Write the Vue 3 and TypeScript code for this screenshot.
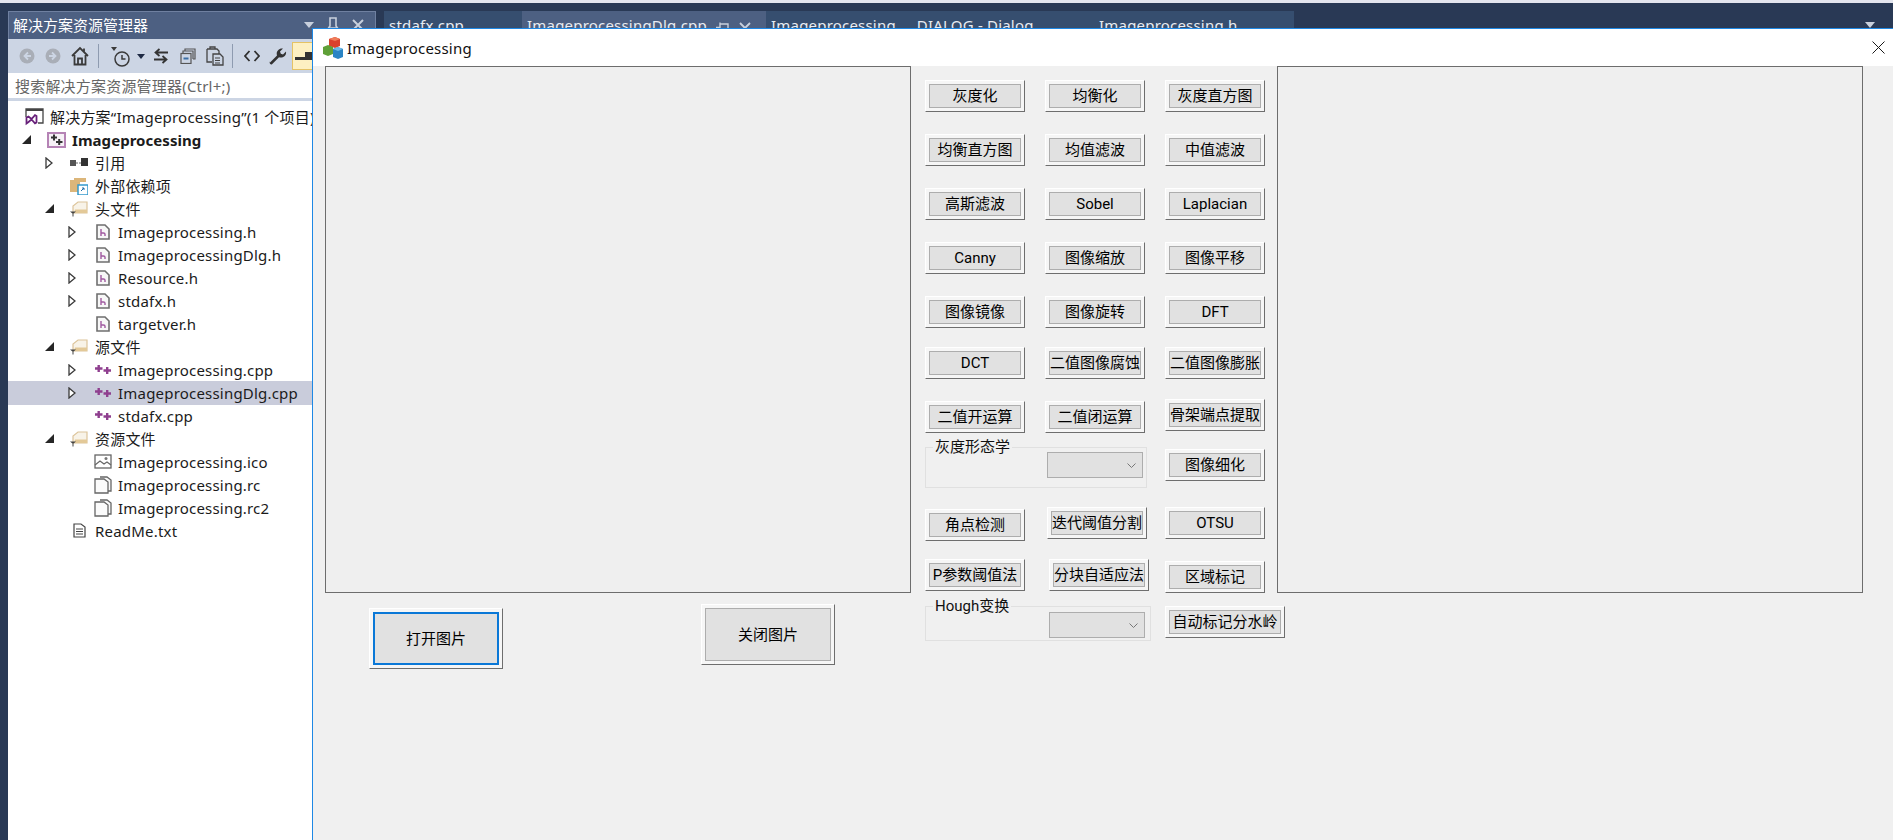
<script setup lang="ts">
interface TreeRow {
  label: string
  level: number
  arrow?: 'open' | 'closed'
  icon: string
  bold?: boolean
  selected?: boolean
}

const treeRows: TreeRow[] = [
  { label: '解决方案“Imageprocessing”(1 个项目)', level: 0, icon: 'solution' },
  { label: 'Imageprocessing', level: 1, arrow: 'open', icon: 'project', bold: true },
  { label: '引用', level: 2, arrow: 'closed', icon: 'refs' },
  { label: '外部依赖项', level: 2, icon: 'ext' },
  { label: '头文件', level: 2, arrow: 'open', icon: 'filter' },
  { label: 'Imageprocessing.h', level: 3, arrow: 'closed', icon: 'h' },
  { label: 'ImageprocessingDlg.h', level: 3, arrow: 'closed', icon: 'h' },
  { label: 'Resource.h', level: 3, arrow: 'closed', icon: 'h' },
  { label: 'stdafx.h', level: 3, arrow: 'closed', icon: 'h' },
  { label: 'targetver.h', level: 3, icon: 'h' },
  { label: '源文件', level: 2, arrow: 'open', icon: 'filter' },
  { label: 'Imageprocessing.cpp', level: 3, arrow: 'closed', icon: 'cpp' },
  { label: 'ImageprocessingDlg.cpp', level: 3, arrow: 'closed', icon: 'cpp', selected: true },
  { label: 'stdafx.cpp', level: 3, icon: 'cpp' },
  { label: '资源文件', level: 2, arrow: 'open', icon: 'filter' },
  { label: 'Imageprocessing.ico', level: 3, icon: 'ico' },
  { label: 'Imageprocessing.rc', level: 3, icon: 'rc' },
  { label: 'Imageprocessing.rc2', level: 3, icon: 'rc' },
  { label: 'ReadMe.txt', level: 2, icon: 'txt' },
]

const gridRows: string[][] = [
  ['灰度化', '均衡化', '灰度直方图'],
  ['均衡直方图', '均值滤波', '中值滤波'],
  ['高斯滤波', 'Sobel', 'Laplacian'],
  ['Canny', '图像缩放', '图像平移'],
  ['图像镜像', '图像旋转', 'DFT'],
]
</script>

<template>
  <div class="desktop">
    <div class="top-strip"></div>
    <div class="ide">
      <section class="explorer">
        <header class="explorer-title">
          <span class="title-text">解决方案资源管理器</span>
          <span class="title-tools">
            <svg width="12" height="8" viewBox="0 0 12 8"><path d="M1 1h10L6 7z" fill="#c8d0dd" /></svg>
            <svg width="12" height="16" viewBox="0 0 12 16"><path d="M3 1h6v8l1.500 2h-9L3 9zM6 11v4" fill="none" stroke="#c8d0dd" stroke-width="1.600" /></svg>
            <svg width="14" height="14" viewBox="0 0 14 14"><path d="M2 2l10 10M12 2L2 12" stroke="#c8d0dd" stroke-width="2" /></svg>
          </span>
        </header>
        <div class="toolbar">
          <svg class="tb-a" width="16" height="16" viewBox="0 0 16 16"><circle cx="8" cy="8" r="7.500" fill="#a9aeb7" /><path d="M9 4.500L5.500 8 9 11.500M6 8h6" fill="none" stroke="#ccd5e4" stroke-width="1.800" /></svg>
          <svg class="tb-b" width="16" height="16" viewBox="0 0 16 16"><circle cx="8" cy="8" r="7.500" fill="#a9aeb7" /><path d="M7 4.500L10.500 8 7 11.500M10 8H4" fill="none" stroke="#ccd5e4" stroke-width="1.800" /></svg>
          <svg class="tb-c" width="18" height="20" viewBox="0 0 18 20"><path d="M1 10l8-8 8 8M3.500 9v9.500h11V9M7 18.500v-6h4v6M13 2.500v4" fill="none" stroke="#3a3a3a" stroke-width="1.800" /></svg>
          <i class="tb-sep sep-a"></i>
          <svg class="tb-d" width="22" height="22" viewBox="0 0 22 22"><path d="M1 1h6L4 5z" fill="#3a3a3a" /><circle cx="12" cy="13" r="7" fill="none" stroke="#3a3a3a" stroke-width="1.500" /><path d="M12 9v4h3.500" fill="none" stroke="#3a3a3a" stroke-width="1.500" /></svg>
          <svg class="tb-e" width="8" height="5" viewBox="0 0 8 5"><path d="M0 0h8L4 5z" fill="#1e2a44" /></svg>
          <svg class="tb-f" width="16" height="16" viewBox="0 0 16 16"><path d="M15 4.500H3M6.500 1L2.500 4.500 6.500 8M1 11.500h12M9.500 8l4 3.500-4 3.500" fill="none" stroke="#333" stroke-width="1.800" /></svg>
          <svg class="tb-g" width="16" height="16" viewBox="0 0 16 16"><path d="M5 3V1h10v10h-2M3 5V3h10v8" fill="none" stroke="#555" stroke-width="1.200" /><rect x="1" y="5.500" width="10" height="10" fill="#ccd5e4" stroke="#555" stroke-width="1.200" /><path d="M3.500 10.500h5" stroke="#3b6ea5" stroke-width="2" /></svg>
          <svg class="tb-h" width="18" height="20" viewBox="0 0 18 20"><path d="M1 3h10l2 2v4M1 3v13h5" fill="none" stroke="#444" stroke-width="1.300" /><path d="M4 3V1h5v2" fill="none" stroke="#444" stroke-width="1.300" /><path d="M7 8h7l3 3v8H7z" fill="#ccd5e4" stroke="#444" stroke-width="1.300" /><path d="M9 12h5M9 14.500h5M9 17h5" stroke="#444" /></svg>
          <i class="tb-sep sep-b"></i>
          <svg class="tb-i" width="16" height="12" viewBox="0 0 16 12"><path d="M5.500 1L1 6l4.500 5M10.500 1L15 6l-4.500 5" fill="none" stroke="#2f2f2f" stroke-width="1.800" /></svg>
          <svg class="tb-j" width="18" height="18" viewBox="0 0 18 18"><path d="M1 15.500L8 8.500C6.800 5 9.500 .8 14 1.500L11 4.500l.8 2.200 2.200.8 3-3c.7 4.500-3.500 7-7 5.800l-7 7c-1 1-3.200-1-2-2.800z" fill="#333" /></svg>
          <span class="tb-pin"><svg width="26" height="10" viewBox="0 0 26 10"><path d="M0 9h26v-3h-6V1H10v5H0z" fill="#333" /></svg></span>
        </div>
        <div class="search">搜索解决方案资源管理器(Ctrl+;)</div>
        <ul class="tree">
          <li v-for="row in treeRows" :key="row.label" class="tree-row" :class="[`lv${row.level}`, { selected: row.selected, bold: row.bold }]">
            <span class="arrow-slot">
              <svg v-if="row.arrow === 'open'" width="9" height="9" viewBox="0 0 9 9"><path d="M9 0v9H0z" fill="#262626" /></svg>
              <svg v-else-if="row.arrow === 'closed'" class="closed-arrow" width="8" height="12" viewBox="0 0 8 12"><path d="M1 1l6 5-6 5z" fill="#fff" stroke="#3a3a3a" stroke-width="1.300" /></svg>
            </span>
            <span class="icon-slot">
              <svg v-if="row.icon === 'solution'" width="19" height="18" viewBox="0 0 19 18"><path d="M1 9V1h17v14h-5" fill="none" stroke="#444" stroke-width="1.300" /><path d="M1 2h17" stroke="#444" stroke-width="2" /><path d="M1.500 9.500v6l2-1.500 3-2.500 3.500 3.800 1.500-.8V8l-1.500-.8-3.500 3.800-3-2.500z" fill="none" stroke="#68217a" stroke-width="1.800" /></svg>
              <svg v-else-if="row.icon === 'project'" width="19" height="16" viewBox="0 0 19 16"><rect x="1" y="1" width="17" height="14" fill="#f6f1f6" stroke="#b583b5" stroke-width="2" /><path d="M4 5.500h6M7 2.500v6M9 10h6.500M12.200 7v6" stroke="#333" stroke-width="2" /></svg>
              <svg v-else-if="row.icon === 'refs'" width="18" height="10" viewBox="0 0 18 10"><rect x="0" y="2" width="6" height="6" fill="#555" /><rect x="11" y="0" width="7" height="8" fill="#333" /><path d="M6 5h5" stroke="#666" stroke-dasharray="2 1" /></svg>
              <svg v-else-if="row.icon === 'ext'" width="18" height="18" viewBox="0 0 18 18"><path d="M0 3h4V1h12v4H0zM0 4h10v11H0z" fill="#dcb67a" /><rect x="8" y="8" width="10" height="10" fill="#fff" stroke="#3399cc" stroke-width="1.500" /><path d="M11 14l3-3M12 11h2v2" stroke="#1e6fa8" fill="none" /></svg>
              <svg v-else-if="row.icon === 'filter'" width="18" height="17" viewBox="0 0 18 17"><path d="M3 13V6l5-4h9v11z" fill="#f8f3e8" stroke="#dcc49a" stroke-width="1.200" /><path d="M5 9.500h12V13H4z" fill="#e3c998" /><path d="M0 11.500h6l-3 2.500z M2.500 14h1v2.500h-1z" fill="#444" /></svg>
              <svg v-else-if="row.icon === 'h'" width="14" height="16" viewBox="0 0 14 16"><path d="M1 1h8l4 4v10H1z" fill="#f7f7f7" stroke="#6f6f6f" stroke-width="1.600" /><path d="M5 5v7M5 9h2.500c1 0 1.500.5 1.500 1.200V12" fill="none" stroke="#a05aa0" stroke-width="1.400" /></svg>
              <svg v-else-if="row.icon === 'cpp'" width="16" height="10" viewBox="0 0 16 10"><path d="M0 3.500h7.500M3.700 0v7M8.500 5.500H16M12.200 2v7" stroke="#8f3f8f" stroke-width="2.400" /></svg>
              <svg v-else-if="row.icon === 'ico'" width="18" height="15" viewBox="0 0 18 15"><rect x="1" y="1" width="16" height="13" fill="#fff" stroke="#666" stroke-width="1.300" /><path d="M1 11l5-4 4 3 3-2 4 3" fill="none" stroke="#666" stroke-width="1.200" /><circle cx="12" cy="4.500" r="1.500" fill="#777" /></svg>
              <svg v-else-if="row.icon === 'rc'" width="18" height="18" viewBox="0 0 18 18"><path d="M6 1h7l4 3v11h-3" fill="#f8f8f8" stroke="#666" stroke-width="1.300" /><path d="M1 3h9l4 3v11H1z" fill="#fbfbfb" stroke="#666" stroke-width="1.300" /></svg>
              <svg v-else width="13" height="15" viewBox="0 0 13 15"><path d="M1 1h7l4 3v10H1z" fill="#fff" stroke="#444" stroke-width="1.200" /><path d="M3 6h7M3 8.500h7M3 11h7" stroke="#444" /></svg>
            </span>
            <span class="tree-label">{{ row.label }}</span>
          </li>
        </ul>
      </section>

      <nav class="tabs">
        <span class="tab tab-a">stdafx.cpp</span>
        <span class="tab tab-b">ImageprocessingDlg.cpp
          <svg width="14" height="12" viewBox="0 0 14 12"><path d="M4 2h8v7H4zM4 5.500H0M4 .500v10" fill="none" stroke="#c8d0dd" stroke-width="1.400" /></svg>
          <svg width="12" height="12" viewBox="0 0 12 12"><path d="M1 1l10 10M11 1L1 11" stroke="#c8d0dd" stroke-width="1.800" /></svg>
        </span>
        <span class="tab tab-c">Imageprocessing.... DIALOG - Dialog</span>
        <span class="tab tab-d">Imageprocessing.h</span>
      </nav>
      <svg class="tab-drop" width="12" height="7" viewBox="0 0 12 7"><path d="M1 0h10L6 6z" fill="#c8d0dd" /></svg>
    </div>

    <div class="dialog">
      <header class="dlg-title">
        <svg class="dlg-icon" width="22" height="22" viewBox="0 0 22 22">
          <path d="M7 2l6-2 5 2v7l-5 2-6-2z" fill="#d9412e" />
          <path d="M13 0l5 2-5 2-6-2z" fill="#ef7d5a" />
          <path d="M1 10l5-2 5 2v7l-5 2-5-2z" fill="#5fa038" />
          <path d="M11 12l5-2 5 2v8l-5 2-5-2z" fill="#2a84c4" />
          <path d="M11 12l5-2 5 2-5 2z" fill="#6cb8e6" />
        </svg>
        <span class="dlg-name">Imageprocessing</span>
        <svg class="dlg-close" width="13" height="13" viewBox="0 0 13 13"><path d="M.5.500l12 12M12.500.500l-12 12" stroke="#1a1a1a" stroke-width="1" /></svg>
      </header>

      <main class="dlg-body">
        <div class="left-col">
          <div class="picture"></div>
          <div class="pic-actions">
            <button class="win-btn big focused">打开图片</button>
            <button class="win-btn big close-btn">关闭图片</button>
          </div>
        </div>

        <div class="controls">
          <div v-for="row in gridRows" :key="row[0]" class="btn-row">
            <button v-for="b in row" :key="b" class="win-btn">{{ b }}</button>
          </div>

          <div class="btn-row row-dct">
            <button class="win-btn">DCT</button>
            <button class="win-btn">二值图像腐蚀</button>
            <button class="win-btn">二值图像膨胀</button>
          </div>
          <div class="btn-row row-open">
            <button class="win-btn">二值开运算</button>
            <button class="win-btn">二值闭运算</button>
            <button class="win-btn up2">骨架端点提取</button>
          </div>
          <div class="btn-row row-group">
            <fieldset class="group gray-group">
              <legend>灰度形态学</legend>
              <span class="combo"><svg width="9" height="5" viewBox="0 0 9 5"><path d="M.5.500L4.500 4.500 8.500.500" fill="none" stroke="#777" /></svg></span>
            </fieldset>
            <button class="win-btn thin-btn">图像细化</button>
          </div>
          <div class="btn-row row-corner">
            <button class="win-btn down2">角点检测</button>
            <button class="win-btn shift2">迭代阈值分割</button>
            <button class="win-btn">OTSU</button>
          </div>
          <div class="btn-row row-p">
            <button class="win-btn">P参数阈值法</button>
            <button class="win-btn shift4">分块自适应法</button>
            <button class="win-btn down2">区域标记</button>
          </div>
          <div class="btn-row row-hough">
            <fieldset class="group hough-group">
              <legend>Hough变换</legend>
              <span class="combo"><svg width="9" height="5" viewBox="0 0 9 5"><path d="M.5.500L4.500 4.500 8.500.500" fill="none" stroke="#777" /></svg></span>
            </fieldset>
            <button class="win-btn wide-btn">自动标记分水岭</button>
          </div>
        </div>

        <div class="picture right-pic"></div>
      </main>
    </div>
  </div>
</template>

<style>
html, body { margin: 0; padding: 0; overflow: hidden; }
</style>

<style scoped>
.desktop {
  position: relative;
  width: 1893px;
  height: 840px;
  overflow: hidden;
  background: #293955;
  font-family: "Noto Sans", "Noto Sans CJK SC", sans-serif;
  font-size: 15px;
  color: #1b1b1b;
}
.top-strip { height: 3px; background: #e3e5ee; }
.ide { display: flex; align-items: flex-start; padding: 8px 0 0 8px; height: 829px; box-sizing: border-box; }

.explorer {
  width: 368px;
  height: 829px;
  flex: none;
  background: #fff;
  display: flex;
  flex-direction: column;
}
.explorer-title {
  height: 28px;
  box-sizing: border-box;
  border: 1px solid #6f80a0;
  border-bottom: none;
  background: #4d6082;
  color: #fff;
  padding: 0 10px 0 4px;
  line-height: 27px;
  display: flex;
  justify-content: space-between;
  align-items: center;
}
.title-text { margin-top: -1px; }
.title-tools { display: flex; gap: 12px; align-items: center; margin-top: -2px; }

.toolbar {
  height: 34px;
  background: #ccd5e4;
  display: flex;
  align-items: center;
  flex: none;
}
.toolbar svg { flex: none; }
.tb-a { margin-left: 11px; }
.tb-b { margin-left: 10px; }
.tb-c { margin-left: 10px; }
.tb-sep { width: 1px; height: 24px; background: #8e9bb0; flex: none; }
.sep-a { margin-left: 9px; }
.tb-d { margin-left: 11px; margin-top: 1px; }
.tb-e { margin-left: 5px; }
.tb-f { margin-left: 8px; }
.tb-g { margin-left: 11px; }
.tb-h { margin-left: 10px; }
.sep-b { margin-left: 8px; }
.tb-i { margin-left: 11px; }
.tb-j { margin-left: 9px; }
.tb-pin {
  margin-left: 5px;
  width: 64px;
  height: 28px;
  box-sizing: border-box;
  background: #fdf0c2;
  border: 1px solid #e5c365;
  display: flex;
  align-items: center;
  padding-left: 2px;
}

.search {
  height: 25px;
  line-height: 26px;
  flex: none;
  background: #fff;
  color: #666;
  padding-left: 7px;
  letter-spacing: 0.2px;
  border-bottom: 3px solid #ccd5e4;
}
.tree { list-style: none; margin: 0; padding: 4px 0 0; }
.tree-row {
  height: 23px;
  display: flex;
  align-items: center;
  white-space: nowrap;
  position: relative;
  letter-spacing: 0.2px;
}
.tree-row.selected { background: #c9ccdb; height: 24px; margin-bottom: -1px; }
.tree-row.bold .tree-label { font-weight: 700; letter-spacing: 0.05px; }
.arrow-slot, .icon-slot { display: flex; align-items: center; justify-content: center; flex: none; }
.arrow-slot { width: 9px; }
.closed-arrow { margin-left: -2px; }
.icon-slot { width: 20px; margin-left: 6px; margin-right: 5px; }
.lv0 { padding-left: 0; }
.lv0 .arrow-slot { width: 0; }
.lv0 .icon-slot { margin-left: 16px; margin-right: 6px; }
.lv1 { padding-left: 14px; }
.lv1 .icon-slot { margin-left: 15px; margin-right: 6px; }
.lv2 { padding-left: 37px; }
.lv2 .icon-slot { margin-left: 15px; margin-right: 6px; }
.lv3 { padding-left: 60px; }
.lv3 .icon-slot { margin-left: 16px; margin-right: 5px; }

.tabs { display: flex; margin-left: 8px; height: 30px; color: #e8ecf3; line-height: 28px; letter-spacing: 0.2px; }
.tab { display: flex; padding-left: 5px; box-sizing: border-box; white-space: nowrap; gap: 9px; align-items: flex-start; height: 30px; }
.tab svg { margin-top: 11px; }
.tab-a { width: 138px; background: #364e6f; }
.tab-b { width: 244px; background: #4d6082; }
.tab-c { width: 328px; background: #364e6f; }
.tab-d { width: 200px; background: #364e6f; }
.tab-drop { position: absolute; right: 17px; top: 22px; }

.dialog {
  position: absolute;
  left: 312px;
  top: 28px;
  width: 1581px;
  height: 812px;
  box-sizing: border-box;
  border-top: 1px solid #1e88e5;
  border-left: 1px solid #1e88e5;
  background: #f0f0f0;
  display: flex;
  flex-direction: column;
  color: #000;
}
.dlg-title {
  height: 37px;
  flex: none;
  background: #fff;
  display: flex;
  align-items: center;
  padding-left: 9px;
  gap: 3px;
  color: #111;
}
.dlg-name { letter-spacing: 0.2px; }
.dlg-close { margin-left: auto; margin-right: 8px; }

.dlg-body { display: flex; align-items: flex-start; padding-left: 12px; flex: 1; }
.picture {
  width: 586px;
  height: 527px;
  box-sizing: border-box;
  border: 1px solid #6d6d6d;
  background: #efefef;
  flex: none;
}
.right-pic { margin-left: -1px; }
.left-col { width: 586px; flex: none; }
.pic-actions { display: flex; align-items: flex-start; padding-left: 44px; margin-top: 15px; }

.win-btn {
  width: 100px;
  height: 32px;
  flex: none;
  box-sizing: border-box;
  margin: 0;
  padding: 0;
  border: 1px solid;
  border-color: #fff #6e6e6e #6e6e6e #fff;
  outline: none;
  background: #e1e1e1;
  box-shadow: inset 0 0 0 3px #f6f6f6, inset 0 0 0 4px #adadad;
  font-family: Roboto, "Noto Sans CJK SC", sans-serif;
  font-size: 15px;
  font-weight: 400;
  line-height: 24px;
  color: #000;
  white-space: nowrap;
  overflow: hidden;
}
.big { width: 134px; height: 61px; }
.focused { box-shadow: inset 0 0 0 3px #f6f6f6, inset 0 0 0 5px #0a78d7; }
.close-btn { margin-left: 198px; margin-top: -4px; }

.controls {
  width: 367px;
  flex: none;
  padding-left: 14px;
  box-sizing: border-box;
  margin-top: 14px;
  display: flex;
  flex-direction: column;
}
.btn-row { display: flex; gap: 20px; height: 32px; margin-bottom: 22px; align-items: flex-start; flex: none; }
.row-dct { margin-top: -3px; }
.row-open { margin-bottom: 0; }
.up2 { margin-top: -2px; }
.row-group { margin-bottom: 0; height: 74px; }
.group {
  margin: 0;
  padding: 0;
  width: 222px;
  box-sizing: border-box;
  border: 1px solid #e0e0e0;
  position: relative;
  flex: none;
  min-width: 0;
}
.group legend {
  margin-left: 7px;
  padding: 0 2px;
  font-size: 15px;
  line-height: 15px;
  height: 15px;
  color: #111;
  font-family: Roboto, "Noto Sans CJK SC", sans-serif;
}
.combo {
  position: absolute;
  box-sizing: border-box;
  width: 96px;
  height: 26px;
  background: #e1e1e1;
  border: 1px solid #adadad;
  display: flex;
  align-items: center;
  justify-content: flex-end;
  padding-right: 6px;
}
.gray-group { margin-top: 7px; height: 48px; }
.gray-group .combo { left: 121px; top: -3px; }
.thin-btn { margin-top: 16px; margin-left: -2px; }
.row-corner { margin-bottom: 20px; }
.down2 { margin-top: 2px; }
.shift2 { margin-left: 2px; margin-right: -2px; }
.shift4 { margin-left: 4px; margin-right: -4px; }
.row-p { margin-bottom: 8px; }
.row-hough { margin-bottom: 0; height: 49px; }
.hough-group { width: 226px; height: 42px; }
.hough-group .combo { left: 123px; top: -2px; }
.wide-btn { width: 120px; margin-left: -6px; margin-top: 7px; }
</style>
